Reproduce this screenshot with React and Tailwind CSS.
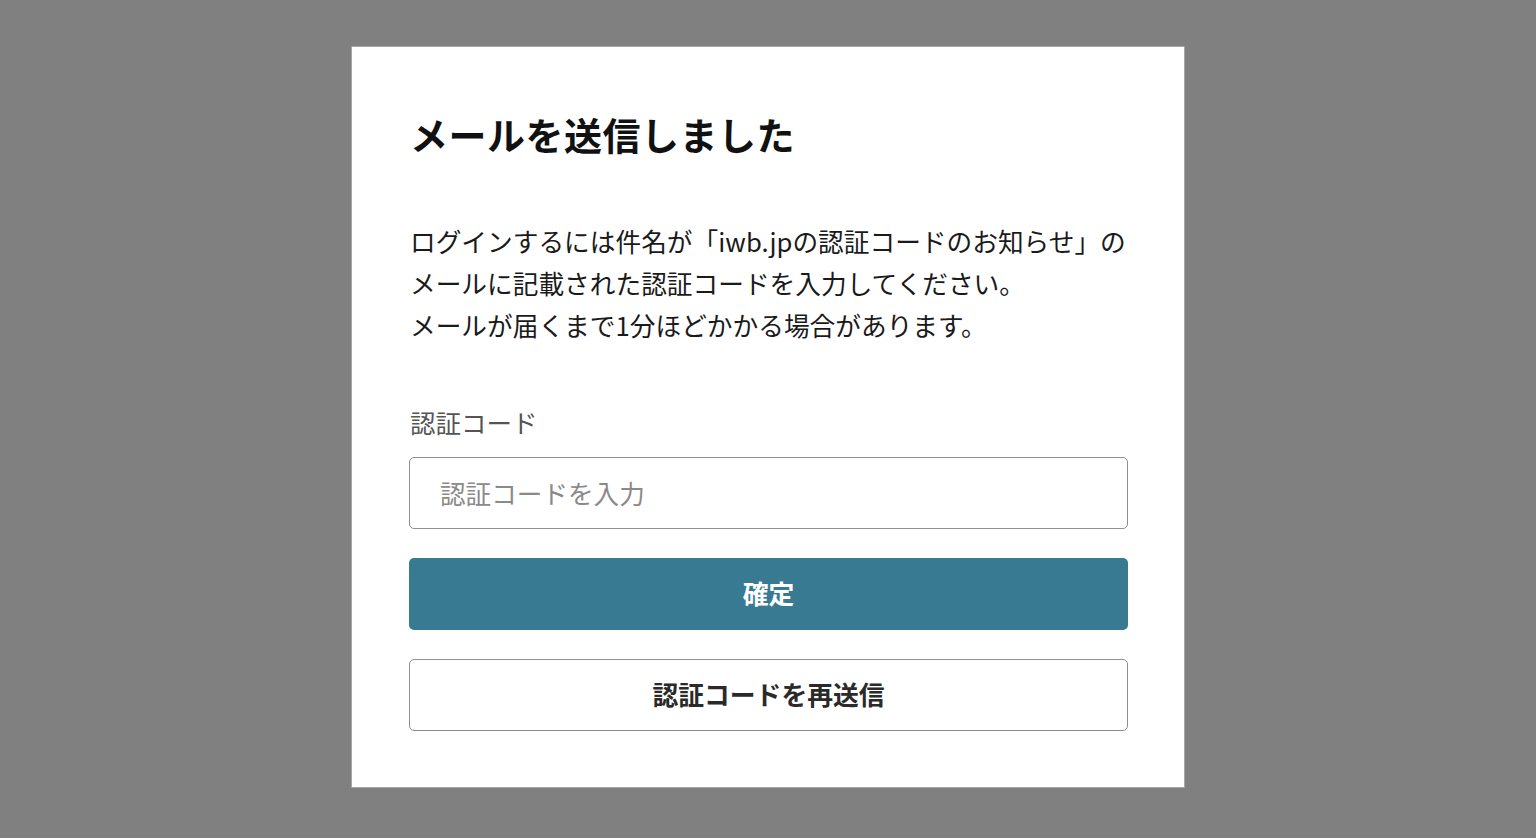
import React from "react";

const font = {
  fontFamily: '"Noto Sans CJK JP", "Noto Sans", sans-serif',
};

const VerifyCodeModal = () => {
  return (
    <div
      className="min-h-screen bg-[#808080] flex items-center justify-center"
      style={font}
    >
      <div className="w-[834px] mb-[5px] bg-white border border-[#a3a7ad] pl-[57px] pr-[56px] pt-[60px] pb-[56px] flex flex-col">
        <h1 className="ml-[1px] text-[38px] leading-[54px] font-bold text-[#111] tracking-[0.5px]">
          メールを送信しました
        </h1>

        <p className="ml-[1px] mt-[59px] text-[25.7px] leading-[42px] text-[#1a1a1a]">
          ログインするには件名が「iwb.jpの認証コードのお知らせ」の
          <br />
          メールに記載された認証コードを入力してください。
          <br />
          メールが届くまで1分ほどかかる場合があります。
        </p>

        <label className="ml-[1px] mt-[58px] text-[25.5px] leading-[36px] text-[#555]">
          認証コード
        </label>

        <input
          type="text"
          placeholder="認証コードを入力"
          className="mt-[17px] h-[72px] w-full rounded-[5px] border border-[#8f8f8f] px-[30px] text-[25.6px] text-[#333] placeholder:text-[#8a8a8a] outline-none"
          style={font}
        />

        <button
          className="mt-[29px] h-[72px] w-full rounded-[5px] bg-[#387a91] text-white text-[25.8px] font-bold"
          style={font}
        >
          確定
        </button>

        <button
          className="mt-[29px] h-[72px] w-full rounded-[5px] border border-[#8f8f8f] bg-white text-[#2a2a2a] text-[25.8px] font-bold"
          style={font}
        >
          認証コードを再送信
        </button>
      </div>
    </div>
  );
};

export default function App() {
  return <VerifyCodeModal />;
}
